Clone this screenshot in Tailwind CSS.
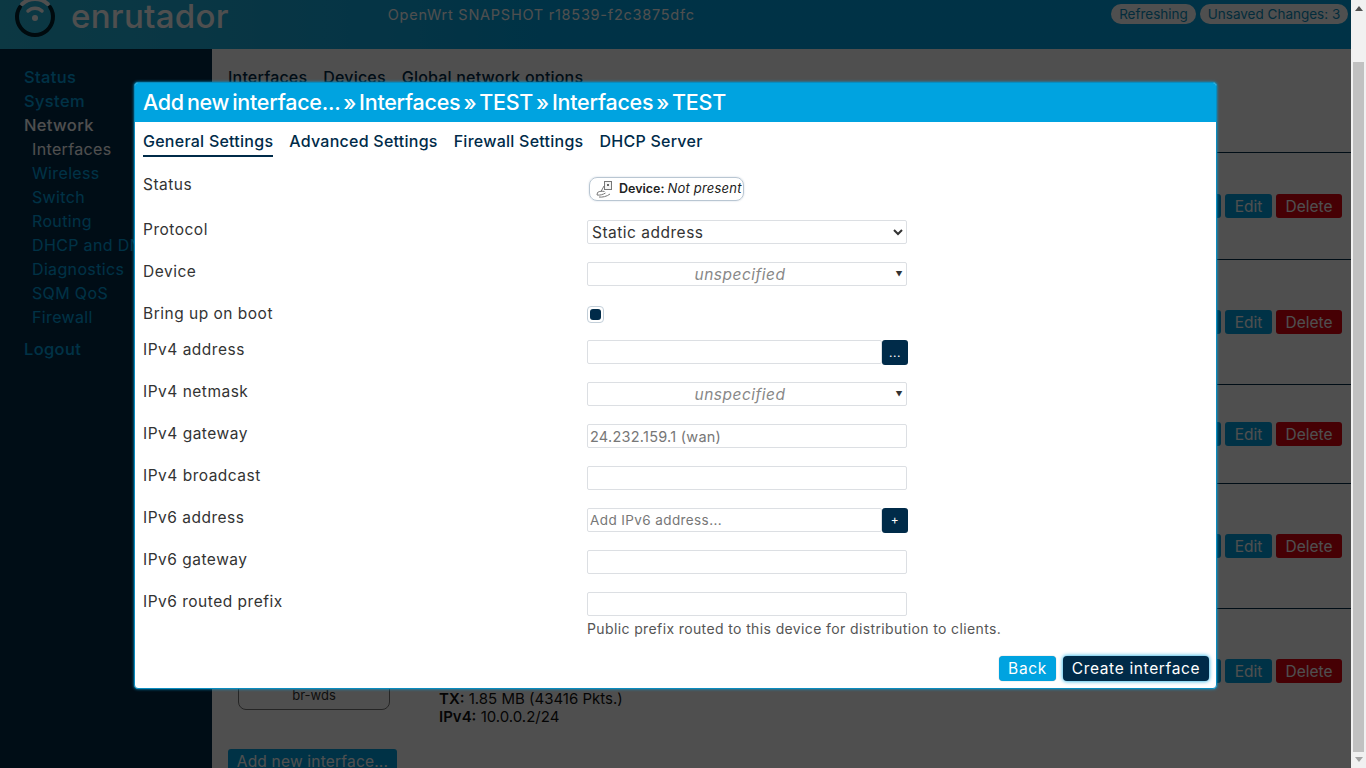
<!DOCTYPE html>
<html lang="en">
<head>
    <meta charset="UTF-8">
    <title>enrutador - Interfaces</title>
    <script src="https://cdn.jsdelivr.net/npm/@tailwindcss/browser@4"></script>
</head>
<body class="h-[768px] w-[1366px] overflow-hidden flex bg-white font-['Inter','Open_Sans',sans-serif] text-[#333]">

    <!-- Page behind the dialog -->
    <div class="relative w-[1351px] h-[768px] overflow-hidden">

        <header class="h-[49px] bg-gradient-to-r from-[#28b4d8] to-[#00a3e0] to-40% flex items-start">
            <svg class="ml-[14px] mt-[-4px] shrink-0" width="42" height="44" viewBox="0 0 42 44" fill="none" stroke="#00202e" stroke-width="4" stroke-linecap="round">
                <path d="M6 11A18 18 0 1 0 36 11"/>
                <path d="M8.200 8A19 19 0 0 1 33.800 8" stroke="#fff" stroke-width="4"/>
                <path d="M14 15A10 10 0 0 1 28 15" stroke="#fff" stroke-width="3.5"/>
                <circle cx="21" cy="22" r="3" fill="#fff" stroke="none"/>
            </svg>
            <span class="ml-[15px] mt-[-5px] pt-[1px] text-[33px] leading-[40px] font-medium text-white tracking-[.3px]">enrutador</span>
            <span class="ml-[159px] mt-[5px] text-[14.5px] leading-[20px] text-white tracking-[.75px]">OpenWrt SNAPSHOT r18539-f2c3875dfc</span>
            <div class="ml-auto mr-[3px] mt-[4px] flex gap-[4px] text-[13.5px] leading-[20px] text-[#0a8fc0]">
                <span class="bg-white rounded-full w-[85px] text-center whitespace-nowrap">Refreshing</span>
                <span class="bg-white rounded-full w-[148px] text-center whitespace-nowrap">Unsaved Changes: 3</span>
            </div>
        </header>

        <div class="flex h-[719px]">
            <nav class="w-[212px] shrink-0 bg-[#002b49] pl-[24px] pt-[16px] text-[#00a3e0] text-[16.5px] font-medium leading-[24px] tracking-[.35px]">
                <div>Status</div>
                <div>System</div>
                <div class="text-white">Network</div>
                <ul class="pl-[8px] text-[16px] font-normal">
                    <li class="text-white">Interfaces</li>
                    <li>Wireless</li>
                    <li>Switch</li>
                    <li>Routing</li>
                    <li class="whitespace-nowrap">DHCP and DNS</li>
                    <li>Diagnostics</li>
                    <li>SQM QoS</li>
                    <li>Firewall</li>
                </ul>
                <div class="mt-[8px]">Logout</div>
            </nav>

            <main class="flex-1 pl-[16px] text-[#002b49]">
                <div class="flex gap-[16px] h-[103px] pt-[16px] text-[16px] font-medium leading-[24px] tracking-[.2px]">
                    <span>Interfaces</span><span>Devices</span><span>Global network options</span>
                </div>
                <div class="flex items-center justify-end gap-[4px] h-[107px] border-t border-[#002b49] pr-[9px]"><span class="h-[24px] w-[66px] rounded-[3px] bg-[#00a3e0]"></span><span class="h-[24px] w-[47px] rounded-[3px] bg-[#00a3e0] text-white text-[15.5px] leading-[25px] text-center">Edit</span><span class="h-[24px] w-[66px] rounded-[3px] bg-[#e0000f] text-white text-[15.5px] leading-[25px] text-center">Delete</span></div>
                <div class="flex items-center justify-end gap-[4px] h-[125px] border-t border-[#002b49] pr-[9px]"><span class="h-[24px] w-[66px] rounded-[3px] bg-[#00a3e0]"></span><span class="h-[24px] w-[47px] rounded-[3px] bg-[#00a3e0] text-white text-[15.5px] leading-[25px] text-center">Edit</span><span class="h-[24px] w-[66px] rounded-[3px] bg-[#e0000f] text-white text-[15.5px] leading-[25px] text-center">Delete</span></div>
                <div class="flex items-center justify-end gap-[4px] h-[99px] border-t border-[#002b49] pr-[9px]"><span class="h-[24px] w-[66px] rounded-[3px] bg-[#00a3e0]"></span><span class="h-[24px] w-[47px] rounded-[3px] bg-[#00a3e0] text-white text-[15.5px] leading-[25px] text-center">Edit</span><span class="h-[24px] w-[66px] rounded-[3px] bg-[#e0000f] text-white text-[15.5px] leading-[25px] text-center">Delete</span></div>
                <div class="flex items-center justify-end gap-[4px] h-[125px] border-t border-[#002b49] pr-[9px]"><span class="h-[24px] w-[66px] rounded-[3px] bg-[#00a3e0]"></span><span class="h-[24px] w-[47px] rounded-[3px] bg-[#00a3e0] text-white text-[15.5px] leading-[25px] text-center">Edit</span><span class="h-[24px] w-[66px] rounded-[3px] bg-[#e0000f] text-white text-[15.5px] leading-[25px] text-center">Delete</span></div>
                <div class="flex items-center h-[125px] border-t border-[#002b49] pr-[9px]">
                    <div class="ml-[10px] w-[152px] h-[78px] border border-[#777] rounded-[8px] flex items-end justify-center pb-[4px] text-[13px] text-[#333]">br-wds</div>
                    <div class="ml-[49px] mt-[74px] text-[15px] leading-[18px] text-[#111] whitespace-nowrap">
                        <div><b class="font-semibold">TX:</b> 1.85 MB (43416 Pkts.)</div>
                        <div><b class="font-semibold">IPv4:</b> 10.0.0.2/24</div>
                    </div>
                    <div class="ml-auto flex gap-[4px] self-center"><span class="h-[24px] w-[66px] rounded-[3px] bg-[#00a3e0]"></span><span class="h-[24px] w-[47px] rounded-[3px] bg-[#00a3e0] text-white text-[15.5px] leading-[25px] text-center">Edit</span><span class="h-[24px] w-[66px] rounded-[3px] bg-[#e0000f] text-white text-[15.5px] leading-[25px] text-center">Delete</span></div>
                </div>
                <div class="mt-[16px] w-[169px] h-[26px] rounded-[3px] bg-[#00a3e0] text-white text-[15.5px] leading-[26px] text-center tracking-[.2px]">Add new interface...</div>
            </main>
        </div>

        <!-- Dim layer -->
        <div class="absolute inset-0 bg-black/[.69]"></div>

        <!-- Dialog -->
        <div class="absolute left-[134px] top-[82px] w-[1083px] h-[607px] bg-white border border-[#0a8cbf] rounded-[4px] shadow-[0_0_3px_#00a3e0] overflow-hidden">
            <h3 class="h-[39px] bg-[#00a3e0] pl-[8px] text-white text-[21.5px] leading-[39px] font-medium tracking-[-.25px] [word-spacing:-2.5px] whitespace-nowrap">Add new interface... » Interfaces » TEST » Interfaces » TEST</h3>

            <div class="flex gap-[16px] h-[35px] pl-[8px] text-[#002b49] text-[16px] font-medium leading-[39px] tracking-[.25px] whitespace-nowrap">
                <span class="border-b-2 border-[#002b49] h-[35px]">General Settings</span>
                <span>Advanced Settings</span>
                <span>Firewall Settings</span>
                <span>DHCP Server</span>
            </div>

            <div class="pl-[8px] text-[15.5px] text-[#333] tracking-[.5px]">
                <div class="flex h-[45px] mt-[16px]">
                    <label class="w-[444px] leading-[24px]">Status</label>
                    <div class="ml-[2px] mt-[4px] w-[155px] h-[24px] border border-[#b9c6d2] rounded-[8px] flex items-center pl-[6px] text-[12.5px] tracking-normal text-[#222] whitespace-nowrap shadow-[0_0_2px_#cbd5df]">
                        <svg class="shrink-0" width="17" height="18" viewBox="0 0 17 18" fill="none" stroke="#777" stroke-width="1">
                            <rect x="8.500" y="1.500" width="7" height="8" fill="#f4f4f4"/>
                            <rect x="11" y="4" width="2" height="2" fill="#666" stroke="none"/>
                            <path d="M8 6 5 11.500M1.500 12.500c2-1.500 5-1.500 7-1M1 15c3 .5 6-.5 8.500-2M1.500 12.500 1 15M3 17c3 .5 8-.5 11-3"/>
                        </svg>
                        <b class="ml-[6px] font-semibold">Device:</b><i class="ml-[3px] text-[13px] tracking-[.2px]">Not present</i>
                    </div>
                </div>
                <div class="flex h-[42px]">
                    <label class="w-[444px] leading-[24px]">Protocol</label>
                    <select class="mt-[2px] w-[320px] h-[24px] border border-[#dcdfe3] rounded-[2px] bg-white text-[15.5px] leading-[22px]"><option>Static address</option></select>
                </div>
                <div class="flex h-[42px]">
                    <label class="w-[444px] leading-[24px]">Device</label>
                    <div class="relative mt-[2px] w-[320px] h-[24px] border border-[#dcdfe3] rounded-[2px] text-center pr-[14px] text-[#888] italic leading-[24px]">unspecified<span class="absolute right-[3px] top-0 not-italic text-[7px] text-[#333]">▼</span></div>
                </div>
                <div class="flex h-[36px]">
                    <label class="w-[444px] leading-[24px]">Bring up on boot</label>
                    <div class="mt-[4px] w-[17px] h-[17px] border border-[#c3cfd9] rounded-[4px] flex items-center justify-center"><span class="w-[11px] h-[11px] rounded-[3px] bg-[#002b49]"></span></div>
                </div>
                <div class="flex h-[42px]">
                    <label class="w-[444px] leading-[24px]">IPv4 address</label>
                    <div class="flex mt-[2px] h-[24px]">
                        <input class="w-[295px] h-[24px] border border-[#dcdfe3] rounded-[2px]">
                        <span class="w-[26px] h-[25px] bg-[#002b49] rounded-[3px] text-white text-[12px] leading-[26px] text-center">...</span>
                    </div>
                </div>
                <div class="flex h-[42px]">
                    <label class="w-[444px] leading-[24px]">IPv4 netmask</label>
                    <div class="relative mt-[2px] w-[320px] h-[24px] border border-[#dcdfe3] rounded-[2px] text-center pr-[14px] text-[#888] italic leading-[24px]">unspecified<span class="absolute right-[3px] top-0 not-italic text-[7px] text-[#333]">▼</span></div>
                </div>
                <div class="flex h-[42px]">
                    <label class="w-[444px] leading-[24px]">IPv4 gateway</label>
                    <input class="mt-[2px] w-[320px] h-[24px] border border-[#dcdfe3] rounded-[2px] pl-[2px] text-[14.5px] tracking-[.25px] placeholder:text-[#777]" placeholder="24.232.159.1 (wan)">
                </div>
                <div class="flex h-[42px]">
                    <label class="w-[444px] leading-[24px]">IPv4 broadcast</label>
                    <input class="mt-[2px] w-[320px] h-[24px] border border-[#dcdfe3] rounded-[2px]">
                </div>
                <div class="flex h-[42px]">
                    <label class="w-[444px] leading-[24px]">IPv6 address</label>
                    <div class="flex mt-[2px] h-[24px]">
                        <input class="w-[295px] h-[24px] border border-[#dcdfe3] rounded-[2px] pl-[2px] text-[13.5px] tracking-[.4px] placeholder:text-[#777]" placeholder="Add IPv6 address...">
                        <span class="w-[26px] h-[25px] bg-[#002b49] rounded-[3px] text-white text-[12px] leading-[24px] text-center">+</span>
                    </div>
                </div>
                <div class="flex h-[42px]">
                    <label class="w-[444px] leading-[24px]">IPv6 gateway</label>
                    <input class="mt-[2px] w-[320px] h-[24px] border border-[#dcdfe3] rounded-[2px]">
                </div>
                <div class="flex">
                    <label class="w-[444px] leading-[24px]">IPv6 routed prefix</label>
                    <div class="mt-[2px]">
                        <input class="block w-[320px] h-[24px] border border-[#dcdfe3] rounded-[2px]">
                        <p class="mt-[4px] text-[14px] leading-[18px] tracking-[.38px] text-[#555] whitespace-nowrap">Public prefix routed to this device for distribution to clients.</p>
                    </div>
                </div>
            </div>

            <div class="absolute right-[7px] bottom-[7px] flex gap-[7px] items-center text-[15.5px] tracking-[.65px] whitespace-nowrap">
                <span class="w-[57px] h-[25px] rounded-[4px] bg-[#00a3e0] text-white text-center leading-[25px] shadow-[0_0_1px_#888]">Back</span>
                <span class="w-[146px] h-[25px] rounded-[4px] bg-[#002b49] text-white text-center leading-[25px] shadow-[0_0_4px_#00a3e0]">Create interface</span>
            </div>
        </div>
    </div>

    <!-- Scrollbar -->
    <div class="w-[15px] h-[768px] bg-[#f1f1f1] relative shrink-0">
        <svg class="absolute left-[4px] top-[6px]" width="8" height="5" viewBox="0 0 8 5"><path d="M4 0 8 5H0z" fill="#505050"/></svg>
        <div class="absolute left-[2px] right-[2px] top-[62px] bottom-[16px] bg-[#c1c1c1]"></div>
        <svg class="absolute left-[4px] bottom-[6px]" width="8" height="5" viewBox="0 0 8 5"><path d="M0 0H8L4 5z" fill="#a3a3a3"/></svg>
    </div>

</body>
</html>
